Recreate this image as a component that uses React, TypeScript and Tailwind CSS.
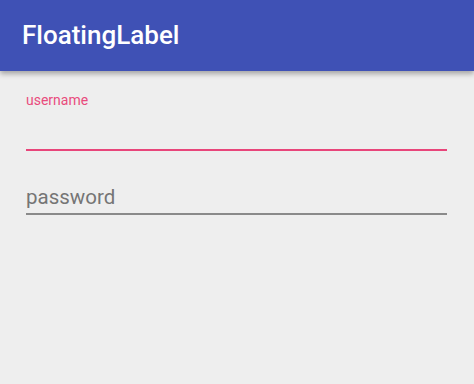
export default function App() {
  return (
    <div className="h-[384px] w-[474px] bg-[#eeeeee] font-['Roboto','Liberation_Sans',sans-serif]">
      <header className="flex h-[71px] items-center bg-[#3f51b5] px-[22px] shadow-[0_3px_5px_rgba(0,0,0,0.3)]">
        <h1 className="text-[26px] font-medium text-white">FloatingLabel</h1>
      </header>

      <div className="flex flex-col px-[26px] pr-[27px]">
        <div className="pt-[20px]">
          <label className="block text-[14px] leading-[18px] text-[#e94b7d]">username</label>
          <input
            className="mt-[15px] block h-[20px] w-full bg-transparent outline-none"
            defaultValue=""
          />
          <div className="mt-[5px] h-[2px] bg-[#e8457a]" />
        </div>

        <div className="pt-[33px]">
          <input
            className="block h-[26px] w-full bg-transparent text-[20.5px] leading-[26px] text-[#616161] outline-none placeholder:text-[#757575]"
            placeholder="password"
          />
          <div className="mt-[3px] h-[2px] bg-[#8a8a8a]" />
        </div>
      </div>
    </div>
  );
}
